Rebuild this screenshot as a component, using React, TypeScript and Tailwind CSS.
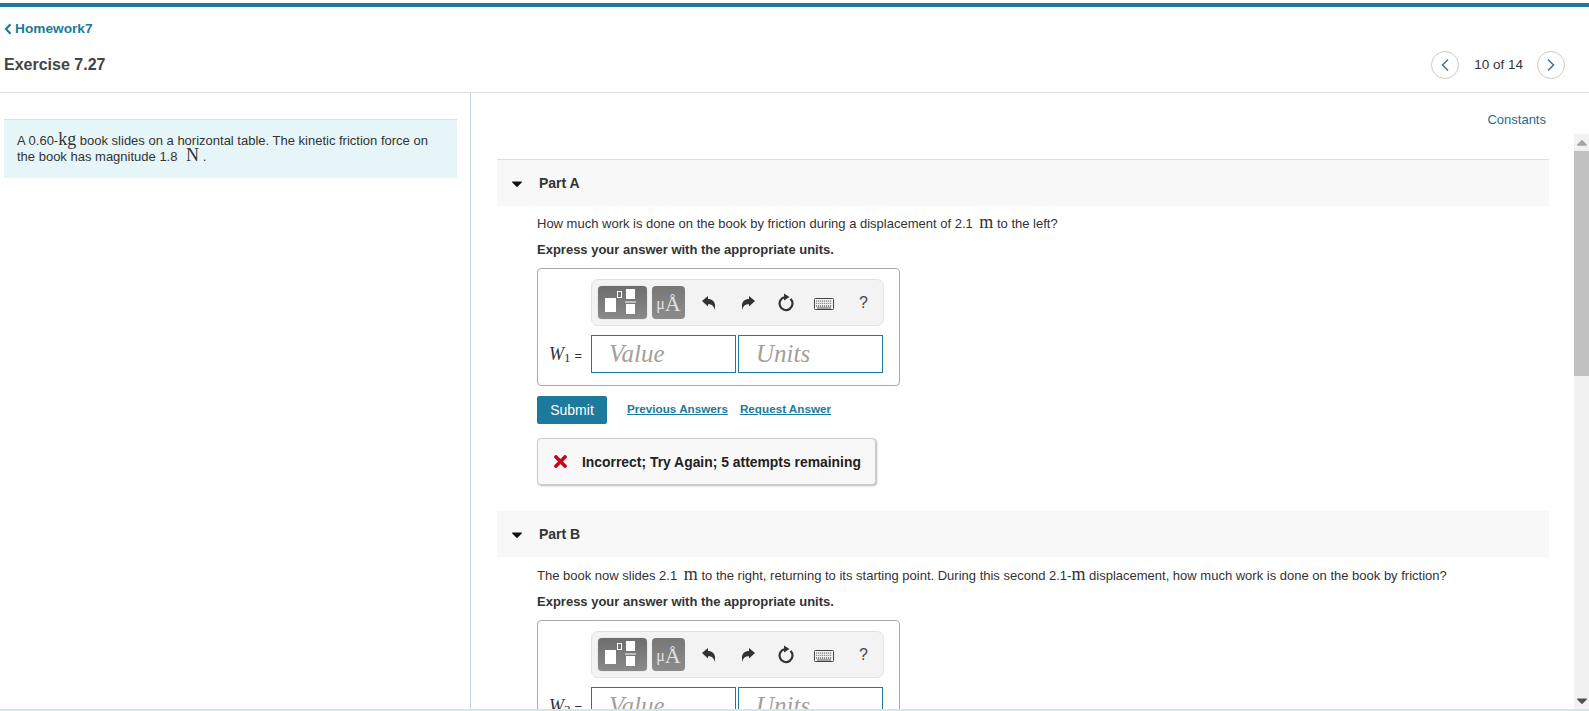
import React from "react";
import { FaTimes, FaCaretDown, FaCaretUp } from "react-icons/fa";

function TemplateIcon() {
  return (
    <svg width="49" height="33" viewBox="0 0 49 33" fill="none">
      <rect x="7" y="12" width="11" height="14" fill="#fff" />
      <rect x="19.5" y="5.5" width="4" height="6" fill="none" stroke="#fff" strokeWidth="1" />
      <rect x="28" y="3" width="9" height="10" fill="#fff" />
      <rect x="27" y="15.5" width="11" height="1" fill="#fff" />
      <rect x="28" y="18" width="9" height="10" fill="#fff" />
    </svg>
  );
}

function UndoIcon({ flip }: { flip?: boolean }) {
  return (
    <svg width="14" height="14" viewBox="0 0 14 14" className={flip ? "-scale-x-100" : ""}>
      <path d="M0 5 L6 0 L6 3 C11 3 14.5 6.5 12.5 14 C12 10 10 8.3 6 8.3 L6 10.5 Z" fill="#333" />
    </svg>
  );
}

function ResetIcon() {
  return (
    <svg width="18" height="20" viewBox="0 0 18 20" fill="none">
      <path d="M8 4.1 A6.5 6.5 0 1 0 13.6 5.9" stroke="#333" strokeWidth="2.2" />
      <path d="M7 0.5 L12.5 4 L7 7.5 Z" fill="#333" />
    </svg>
  );
}

function KeyboardIcon() {
  return (
    <svg width="20" height="12" viewBox="0 0 20 12" fill="none">
      <rect x="0.5" y="0.5" width="19" height="11" rx="1" fill="#f4f4f4" stroke="#444" />
      <path d="M2 3h16M2 5.3h16" stroke="#888" strokeWidth="1.3" strokeDasharray="1.2 .8" />
      <path d="M2 8h16" stroke="#666" strokeWidth="1.3" strokeDasharray="1.2 .8" />
      <path d="M3 10h14" stroke="#555" strokeWidth="1" />
    </svg>
  );
}

function Toolbar() {
  return (
    <div className="flex h-[47px] w-[293px] items-center rounded-[7px] border border-[#e2e2e2] bg-[#f3f3f3] pl-[6px]">
      <div className="h-[33px] w-[49px] rounded-[4px] bg-gradient-to-b from-[#6d6d6d] to-[#8a8a8a] shadow-[0_0_1px_#999]">
        <TemplateIcon />
      </div>
      <div className="ml-[5px] flex h-[33px] w-[33px] items-end justify-center rounded-[4px] bg-gradient-to-b from-[#777] to-[#8c8c8c] pb-[5px] font-['Liberation_Serif',serif] leading-[20px] text-[#e2e2e2]">
        <span className="text-[16px]">μ</span><span className="text-[22px]">Å</span>
      </div>
      <div className="ml-[17px] flex w-[14px] justify-center"><UndoIcon /></div>
      <div className="ml-[25px] flex w-[14px] justify-center"><UndoIcon flip /></div>
      <div className="ml-[22px] flex w-[18px] justify-center"><ResetIcon /></div>
      <div className="ml-[19px] mt-[3px] flex w-[20px] justify-center"><KeyboardIcon /></div>
      <div className="ml-[25px] text-[16px] text-[#444]">?</div>
    </div>
  );
}

function AnswerBox({ sub }: { sub: string }) {
  return (
    <div className="mt-[9px] w-[363px] rounded-[4px] border border-[#aaa] pl-[53px] pt-[10px] pb-[12px]">
      <Toolbar />
      <div className="relative mt-[9px] flex gap-[2px]">
        <div className="absolute left-[-42px] top-[9px] flex items-baseline text-[#333]">
          <span className="font-['Liberation_Serif',serif] text-[18px] italic leading-[20px]">W</span>
          <span className="translate-y-[2px] font-['Liberation_Serif',serif] text-[13px] leading-[20px]">{sub}</span>
          <span className="ml-[4px] text-[13px] leading-[20px]">=</span>
        </div>
        <div className="flex h-[38px] w-[145px] items-center border border-[#1c7a9c] pl-[17px] font-['Liberation_Serif',serif] text-[25px] italic text-[#a39f9b]">Value</div>
        <div className="flex h-[38px] w-[145px] items-center border border-[#1c7a9c] pl-[17px] font-['Liberation_Serif',serif] text-[25px] italic text-[#a39f9b]">Units</div>
      </div>
    </div>
  );
}

function PartHeader({ name }: { name: string }) {
  return (
    <div className="flex h-[46px] items-center bg-[#f8f8f8] pl-[12px] text-[14px] font-bold text-[#333]">
      <FaCaretDown className="w-[16px] text-[17px] text-[#111]" />
      <span className="ml-[14px]">{name}</span>
    </div>
  );
}

const M = ({ children }: { children: React.ReactNode }) => (
  <span className="font-['Liberation_Serif',serif] text-[18px] leading-[0]">{children}</span>
);

export default function App() {
  return (
    <div className="flex h-[711px] w-[1589px] flex-col overflow-hidden bg-white pt-[3px] font-['Liberation_Sans',Arial,sans-serif] text-[13px] text-[#333]">
      <div className="h-[4px] shrink-0 bg-[#1c7a9c]" />
      <header className="flex h-[86px] shrink-0 items-start justify-between border-b border-[#ddd] pl-[4px] pr-[24px]">
        <div>
          <div className="mt-[13px] flex items-center text-[13.7px] font-bold leading-[18px] text-[#1c7a9c]">
            <svg width="8" height="12" viewBox="0 0 8 12" fill="none" className="mr-[3px]"><path d="M6.5 1.2 L2 6 L6.5 10.8" stroke="#1c7a9c" strokeWidth="2.2" /></svg>Homework7
          </div>
          <h1 className="mt-[17px] text-[16px] font-bold leading-[20px] text-[#444]">Exercise 7.27</h1>
        </div>
        <div className="mt-[44px] flex items-center">
          <div className="flex h-[28px] w-[28px] items-center justify-center rounded-full border border-[#ccc]">
            <svg width="10" height="14" viewBox="0 0 10 14" fill="none"><path d="M8 1.5 L2.5 7 L8 12.5" stroke="#4b6d82" strokeWidth="1.5" /></svg>
          </div>
          <span className="ml-[15px] mr-[14px] text-[13.5px]">10 of 14</span>
          <div className="flex h-[28px] w-[28px] items-center justify-center rounded-full border border-[#ccc]">
            <svg width="10" height="14" viewBox="0 0 10 14" fill="none"><path d="M2 1.5 L7.5 7 L2 12.5" stroke="#4b6d82" strokeWidth="1.5" /></svg>
          </div>
        </div>
      </header>
      <div className="flex min-h-0 flex-1">
        <aside className="w-[471px] shrink-0 border-r border-[#c5d3de] pl-[4px] pt-[26px]">
          <div className="h-[59px] w-[453px] border-t border-[#d7e4e6] bg-[#e6f6f8] pl-[13px] pt-[13px] leading-[16px]">
            A 0.60-<span className="font-['Liberation_Serif',serif] text-[18px] leading-[0]">kg</span> book slides on a horizontal table. The kinetic friction force on<br />
            the book has magnitude 1.8 <span className="ml-[5px] font-['Liberation_Serif',serif] text-[18px] leading-[0]">N</span> .
          </div>
        </aside>
        <main className="flex min-w-0 flex-1 flex-col">
          <div className="flex h-[41px] shrink-0 justify-end pr-[43px] pt-[18px] leading-[18px] text-[#1c6f8c]">Constants</div>
          <div className="flex min-h-0 flex-1">
            <div className="min-w-0 flex-1 overflow-hidden pl-[26px] pr-[25px] pt-[25px]">
              <div className="border-t border-[#ddd]">
                <PartHeader name="Part A" />
                <div className="pl-[40px]">
                  <p className="mt-[9px] leading-[18px]">How much work is done on the book by friction during a displacement of 2.1 <span className="ml-[3px]"><M>m</M></span> to the left?</p>
                  <p className="mt-[8px] font-bold leading-[18px]">Express your answer with the appropriate units.</p>
                  <AnswerBox sub="1" />
                  <div className="mt-[10px] flex items-start">
                    <button className="h-[28px] w-[70px] rounded-[2px] bg-[#1c7a9c] text-[14px] text-white">Submit</button>
                    <a className="ml-[20px] mt-[5px] text-[11.7px] font-bold leading-[16px] text-[#1c7a9c] underline">Previous Answers</a>
                    <a className="ml-[12px] mt-[5px] text-[11.7px] font-bold leading-[16px] text-[#1c7a9c] underline">Request Answer</a>
                  </div>
                  <div className="mt-[14px] flex h-[47px] w-[339px] items-center rounded-[4px] border border-[#ccc] bg-[#f8f8f8] pl-[13px] text-[13.9px] font-bold text-[#222] shadow-[1px_1px_2px_#bbb]">
                    <FaTimes className="text-[19px] text-[#d0021b]" />
                    <span className="ml-[12px] translate-y-[1px]">Incorrect; Try Again; 5 attempts remaining</span>
                  </div>
                </div>
              </div>
              <div className="mt-[26px]">
                <PartHeader name="Part B" />
                <div className="pl-[40px]">
                  <p className="mt-[10px] leading-[18px]">The book now slides 2.1 <span className="ml-[3px]"><M>m</M></span> to the right, returning to its starting point. During this second 2.1-<M>m</M> displacement, how much work is done on the book by friction?</p>
                  <p className="mt-[8px] font-bold leading-[18px]">Express your answer with the appropriate units.</p>
                  <AnswerBox sub="2" />
                </div>
              </div>
            </div>
            <div className="flex w-[15px] shrink-0 flex-col items-center bg-[#f1f1f1]">
              <FaCaretUp className="h-[17px] text-[12px] text-[#a3a3a3]" />
              <div className="h-[225px] w-full bg-[#c1c1c1]" />
              <div className="flex-1" />
              <FaCaretDown className="h-[17px] text-[12px] text-[#505050]" />
            </div>
          </div>
        </main>
      </div>
      <div className="h-[2px] shrink-0 bg-[#d5e5e8]" />
    </div>
  );
}
